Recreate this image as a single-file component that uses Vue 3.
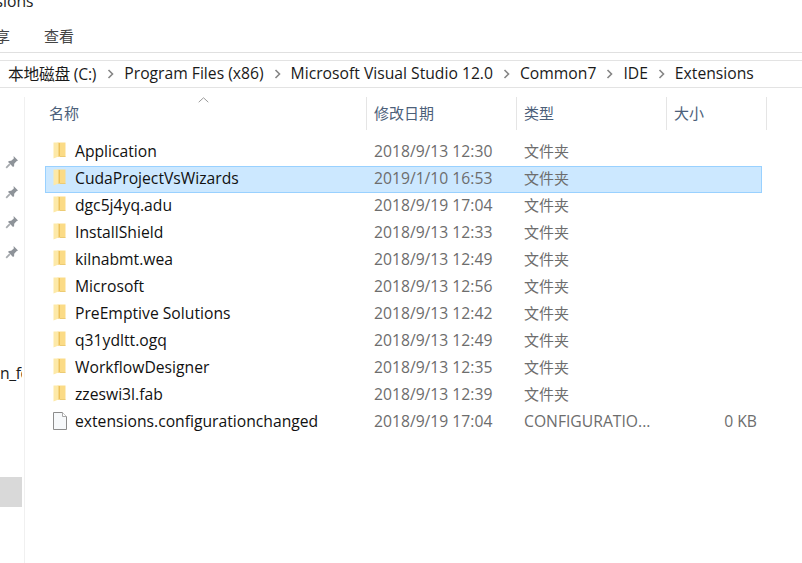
<script setup>
const crumbs = ['本地磁盘 (C:)', 'Program Files (x86)', 'Microsoft Visual Studio 12.0', 'Common7', 'IDE', 'Extensions']
const columns = [
  { label: '名称', cls: 'c-name' },
  { label: '修改日期', cls: 'c-date' },
  { label: '类型', cls: 'c-type' },
  { label: '大小', cls: 'c-size' }
]
const rows = [
  { name: 'Application', date: '2018/9/13 12:30', type: '文件夹', size: '' },
  { name: 'CudaProjectVsWizards', date: '2019/1/10 16:53', type: '文件夹', size: '', selected: true },
  { name: 'dgc5j4yq.adu', date: '2018/9/19 17:04', type: '文件夹', size: '' },
  { name: 'InstallShield', date: '2018/9/13 12:33', type: '文件夹', size: '' },
  { name: 'kilnabmt.wea', date: '2018/9/13 12:49', type: '文件夹', size: '' },
  { name: 'Microsoft', date: '2018/9/13 12:56', type: '文件夹', size: '' },
  { name: 'PreEmptive Solutions', date: '2018/9/13 12:42', type: '文件夹', size: '' },
  { name: 'q31ydltt.ogq', date: '2018/9/13 12:49', type: '文件夹', size: '' },
  { name: 'WorkflowDesigner', date: '2018/9/13 12:35', type: '文件夹', size: '' },
  { name: 'zzeswi3l.fab', date: '2018/9/13 12:39', type: '文件夹', size: '' },
  { name: 'extensions.configurationchanged', date: '2018/9/19 17:04', type: 'CONFIGURATIO...', size: '0 KB', file: true }
]
</script>

<template>
  <div class="window">
    <div class="title">nsions</div>
    <div class="tabs">
      <span class="tab-share">享</span>
      <span class="tab-view">查看</span>
    </div>
    <div class="address">
      <template v-for="(c, i) in crumbs" :key="c">
        <svg v-if="i" class="chev" width="7" height="10" viewBox="0 0 7 10"><path d="M1.5 1l4 4-4 4" fill="none" stroke="#858585" stroke-width="1.6"/></svg>
        <span class="crumb">{{ c }}</span>
      </template>
    </div>
    <div class="body">
      <aside class="side">
        <div class="pins">
          <svg v-for="n in 4" :key="n" class="pin" width="14" height="14" viewBox="0 0 14 14">
            <path d="M8.6 1l4.4 4.4-1.5.8-2.3 2.6-.1 2.4-1.1.7-4.9-4.9.7-1.1 2.4-.1 2.6-2.3z" fill="#8e9399"/>
            <path d="M4.8 9.2L1.2 12.8" stroke="#a6aaae" stroke-width="1.8" fill="none"/>
          </svg>
        </div>
        <div class="side-text">n_fo</div>
        <div class="side-active"></div>
      </aside>
      <main class="list">
        <div class="head">
          <svg class="sort" width="11" height="6" viewBox="0 0 11 6"><path d="M.7 5.2L5.5.8l4.8 4.4" fill="none" stroke="#9a9a9a" stroke-width="1"/></svg>
          <div v-for="c in columns" :key="c.label" class="head-cell" :class="c.cls">{{ c.label }}</div>
        </div>
        <div class="rows">
          <div v-for="r in rows" :key="r.name" class="row" :class="{ selected: r.selected }">
            <div class="cell-name">
              <svg v-if="!r.file" class="icon" width="13" height="17" viewBox="0 0 13 17">
                <path d="M4.5 0.5H12.5V14.5H4.5z" fill="#fbdb86"/>
                <path d="M4.5 1H7V14.5H4.5z" fill="#edc25c"/>
                <path d="M0.5 0.5H5.5V14.5L0.5 16.5z" fill="#fde9a8"/>
                <path d="M7 14.5H12.5" stroke="#eccb74" stroke-width="1" fill="none"/>
              </svg>
              <svg v-else class="icon file" width="14" height="18" viewBox="0 0 14 18">
                <path d="M.5.5H9.5L13.5 4.5V17.5H.5z" fill="#f7f9fb" stroke="#8c8c8c"/>
                <path d="M9.5.5V4.5H13.5" fill="#fff" stroke="#a8a8a8"/>
              </svg>
              <span class="name">{{ r.name }}</span>
            </div>
            <div class="cell c-date">{{ r.date }}</div>
            <div class="cell c-type" :class="{ cjk: !r.file }">{{ r.type }}</div>
            <div class="cell c-size">{{ r.size }}</div>
          </div>
        </div>
      </main>
    </div>
  </div>
</template>

<style>
html, body { margin: 0; background: #fff; overflow: hidden; }
</style>

<style scoped>
.window {
  width: 802px;
  height: 563px;
  overflow: hidden;
  background: #fff;
  display: flex;
  flex-direction: column;
  font-family: "Open Sans", "Noto Sans CJK SC", sans-serif;
  font-size: 15.7px;
  color: #1a1a1a;
}
.title {
  height: 10px;
  margin-top: -10px;
  line-height: 22px;
  margin-left: -14px;
  flex: none;
  color: #222;
}
.tabs {
  height: 43px;
  margin-top: 10px;
  flex: none;
  display: flex;
  align-items: center;
  box-sizing: border-box;
  padding-top: 9px;
  color: #444;
  font-size: 15px;
  border-bottom: 1px solid #e0e0e0;
}
.tab-share { margin-left: -5px; width: 49px; }
.address {
  margin-top: 7px;
  height: 28px;
  box-sizing: border-box;
  flex: none;
  border-top: 1px solid #e3e3e3;
  border-bottom: 1px solid #e3e3e3;
  display: flex;
  align-items: center;
  padding: 0 0 2px 8px;
  color: #1a1a1a;
}
.chev { margin: 2px 10px 0 10px; flex: none; }
.crumb { white-space: nowrap; }
.crumb:first-of-type { letter-spacing: -0.2px; margin-right: 1px; }
.body { flex: 1; display: flex; min-height: 0; }
.side {
  width: 22px;
  flex: none;
  overflow: hidden;
  padding-right: 2px;
  border-right: 1px solid #f0f0f0;
  margin-top: 9px;
}
.pins {
  padding: 58px 0 0 5px;
  display: flex;
  flex-direction: column;
  gap: 16px;
}
.pin { display: block; }
.side-text {
  margin-top: 103px;
  width: 22px;
  height: 22px;
  line-height: 22px;
  overflow: hidden;
  white-space: nowrap;
  color: #1a1a1a;
  letter-spacing: -0.4px;
}
.side-active {
  margin-top: 93px;
  width: 22px;
  height: 30px;
  background: #d9d9d9;
}
.list { flex: 1; min-width: 0; }
.head {
  position: relative;
  margin-top: 9px;
  height: 33px;
  display: flex;
  padding-left: 20px;
  color: #4c607a;
  font-size: 15px;
}
.head-cell {
  box-sizing: border-box;
  line-height: 33px;
  border-right: 1px solid #e5e5e5;
}
.head .c-name { width: 322px; padding-left: 4px; }
.head .c-date { width: 150px; padding-left: 7px; }
.head .c-type { width: 150px; padding-left: 7px; }
.head .c-size { width: 100px; padding-left: 7px; }
.sort { position: absolute; left: 173px; top: 0; }
.rows { margin-top: 9px; padding-left: 20px; }
.row {
  width: 717px;
  height: 27px;
  box-sizing: border-box;
  border: 1px solid transparent;
  padding-bottom: 4px;
  display: flex;
  align-items: center;
  color: #6d6d6d;
  white-space: nowrap;
}
.row.selected { background: #cce8ff; border-color: #99d1ff; }
.cell-name {
  width: 328px;
  flex: none;
  display: flex;
  align-items: center;
  box-sizing: border-box;
  padding-left: 7px;
  color: #111;
}
.icon { flex: none; margin-right: 9px; display: block; }
.icon.file { margin-right: 8px; margin-top: 1px; }
.cell { flex: none; }
.cjk { font-size: 15px; }
.row .c-date { width: 150px; }
.row .c-type { width: 150px; }
.row .c-size { width: 83px; text-align: right; }
</style>
